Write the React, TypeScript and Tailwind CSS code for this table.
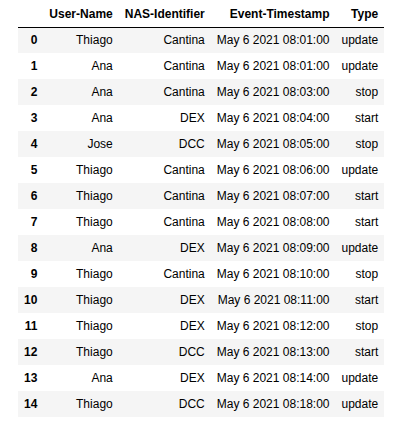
import React from "react";

const rows: [string, string, string, string][] = [
  ["Thiago", "Cantina", "May 6 2021 08:01:00", "update"],
  ["Ana", "Cantina", "May 6 2021 08:01:00", "update"],
  ["Ana", "Cantina", "May 6 2021 08:03:00", "stop"],
  ["Ana", "DEX", "May 6 2021 08:04:00", "start"],
  ["Jose", "DCC", "May 6 2021 08:05:00", "stop"],
  ["Thiago", "Cantina", "May 6 2021 08:06:00", "update"],
  ["Thiago", "Cantina", "May 6 2021 08:07:00", "start"],
  ["Thiago", "Cantina", "May 6 2021 08:08:00", "start"],
  ["Ana", "DEX", "May 6 2021 08:09:00", "update"],
  ["Thiago", "Cantina", "May 6 2021 08:10:00", "stop"],
  ["Thiago", "DEX", "May 6 2021 08:11:00", "start"],
  ["Thiago", "DEX", "May 6 2021 08:12:00", "stop"],
  ["Thiago", "DCC", "May 6 2021 08:13:00", "start"],
  ["Ana", "DEX", "May 6 2021 08:14:00", "update"],
  ["Thiago", "DCC", "May 6 2021 08:18:00", "update"],
];

const headers = ["", "User-Name", "NAS-Identifier", "Event-Timestamp", "Type"];

export default function App() {
  return (
    <div
      className="w-[402px] h-[424px] bg-white pt-[1px] pl-[18px] text-black"
      style={{ fontFamily: '"Liberation Sans", Arial, sans-serif' }}
    >
      <table className="border-collapse text-[12px] leading-[14px]">
        <thead>
          <tr className="border-b border-black">
            {headers.map((h, i) => (
              <th
                key={i}
                className="h-[26px] px-[6px] text-right font-bold whitespace-nowrap align-middle"
              >
                {h}
              </th>
            ))}
          </tr>
        </thead>
        <tbody>
          {rows.map((r, i) => (
            <tr key={i} className={i % 2 === 0 ? "bg-[#f5f5f5]" : "bg-white"}>
              <th className="h-[26px] px-[6px] text-right font-bold align-middle">{i}</th>
              {r.map((c, j) => (
                <td key={j} className="h-[26px] px-[6px] text-right whitespace-nowrap align-middle">
                  {c}
                </td>
              ))}
            </tr>
          ))}
        </tbody>
      </table>
    </div>
  );
}
